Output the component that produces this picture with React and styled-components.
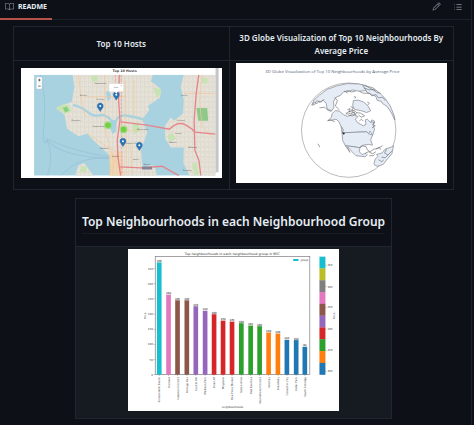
import React from 'react';
import styled, { createGlobalStyle } from 'styled-components';
import { GoBook, GoPencil, GoListUnordered } from 'react-icons/go';

const GlobalStyle = createGlobalStyle`
  * { box-sizing: border-box; }
  body {
    margin: 0;
    background: #0d1117;
    color: #e6edf3;
    font-family: "Noto Sans", "Open Sans", sans-serif;
  }
`;

const Panel = styled.main`
  min-height: 100vh;
  margin-right: 2px;
  border-right: 1px solid #1c222a;
`;

const Bar = styled.header`
  display: flex;
  justify-content: space-between;
  height: 20px;
  border-bottom: 1px solid #1c222a;
`;

const Tab = styled.a`
  display: flex;
  align-items: center;
  gap: 4px;
  padding: 0 5px 5px 5px;
  height: 20px;
  border-bottom: 2px solid #b5524b;
  color: #e6edf3;
  font-size: 7px;
  font-weight: 700;
  text-decoration: none;
  svg { color: #8b949e; }
`;

const Tools = styled.div`
  display: flex;
  align-items: flex-start;
  gap: 12px;
  padding: 2px 8px 0 0;
`;

const ToolButton = styled.button`
  display: flex;
  padding: 0;
  border: 0;
  background: none;
  color: #8b949e;
`;

const Article = styled.article`
  display: flex;
  flex-direction: column;
  align-items: center;
  gap: 8px;
  padding: 6px 17px 4px 13px;
`;

const Table = styled.table`
  width: ${(p) => p.$width};
  border-collapse: collapse;
  table-layout: fixed;
`;

const HeadCell = styled.th`
  width: ${(p) => p.$width};
  height: ${(p) => p.$height};
  padding: 0 6px;
  border: 1px solid #20262e;
  font-size: 8px;
  line-height: 13px;
  font-weight: 600;
`;

const Cell = styled.td`
  padding: ${(p) => p.$pad};
  border: 1px solid #20262e;
  background: ${(p) => (p.$raised ? '#161b22' : 'transparent')};
`;

const Title = styled.h1`
  margin: 2px 0 0;
  padding-bottom: 2px;
  border-bottom: 1px solid #171c23;
  font-size: 12px;
  line-height: 19px;
  font-weight: 600;
  white-space: nowrap;
`;

const Picture = styled.svg`
  display: block;
  width: ${(p) => p.$width || '100%'};
  margin: 0 auto;
  background: #fff;
`;

const pins = [[255, 154], [303, 120], [323, 259], [372, 271]];
const places = [
  [255, 72, 'Greenwood'], [204, 108, 'Ballard'], [255, 120, 'Phinney'], [182, 183, 'Magnolia'],
  [250, 202, 'Queen Anne'], [268, 266, 'Belltown'], [300, 290, 'Seattle'], [382, 210, 'Washington'],
  [347, 250, 'Capitol Hill'], [362, 298, 'Leschi'], [506, 108, 'Juanita'], [496, 184, 'Kirkland'],
  [488, 220, 'Yarrow'], [472, 247, 'Medina'], [531, 263, 'Bellevue'], [515, 332, 'Eastgate'],
  [395, 315, 'Mercer'],
];

const HostsMap = () => (
  <Picture viewBox="18 24 600 330" role="img" aria-label="Map of the top 10 hosts">
    <defs>
      <pattern id="streets" width="12" height="15" patternUnits="userSpaceOnUse">
        <path d="M4 0V15M10 0V9M0 5H12M0 12H9" stroke="#cfcac2" strokeWidth="1" fill="none" />
      </pattern>
      <clipPath id="mapArea"><rect x="57" y="44" width="543" height="302" /></clipPath>
    </defs>
    <text x="328" y="36" fontSize="10" fontFamily="DejaVu Sans" fontWeight="700" textAnchor="middle" fill="#444">Top 10 Hosts</text>
    <g clipPath="url(#mapArea)">
      <rect x="57" y="44" width="543" height="302" fill="#a8d2df" />
      {['#e9e5da', 'url(#streets)'].map((fill) => (
        <g key={fill} fill={fill}>
          <path d="M172 44L178 80 170 126 145 134 124 145 148 163 156 206 190 228 216 220 236 242 258 262 282 284 286 312 284 346H410L390 332 380 310 377 270 396 215 380 178 402 150 397 138 434 112 436 86 406 64 412 44Z" />
          <path d="M180 346L190 316 207 308 235 346Z" />
          <path d="M505 44L496 80 505 120 503 160 476 182 466 172 448 198 450 236 466 262 505 262 504 308 522 346H600V44Z" />
          <path d="M384 346L392 322 402 314 418 318 424 346Z" />
        </g>
      ))}
      <g fill="#c7e3b4">
        <path d="M122 144L143 133 160 134 170 152 150 161Z" />
        <path d="M412 82L434 86 438 100 424 112Z" />
        <path d="M226 50L244 46 250 60 232 66Z" />
        <path d="M350 190L369 186 374 212 356 222Z" />
        <path d="M530 310L543 306 550 342 537 346Z" />
        <path d="M200 318L216 320 212 338 194 332Z" />
        <path d="M560 52L578 56 574 72 558 68Z" />
        <path d="M455 228L470 218 482 236 464 244Z" />
      </g>
      <path d="M543 144H575L578 182H548Z" fill="#8fc98a" />
      <path d="M143 143L155 139 162 152 150 157Z" fill="#86d07f" />
      <path d="M174 134Q200 140 218 156T262 164Q280 168 290 184L302 182Q310 164 330 166T384 178" fill="none" stroke="#a8d2df" strokeWidth="7" />
      <path d="M286 180L304 184 302 214 292 222 284 202Z" fill="#a8d2df" />
      <path d="M272 96Q282 88 286 104T276 122Z" fill="#a8d2df" />
      <path d="M76 44Q94 110 87 190T96 240Q116 280 98 346M96 236Q180 276 286 290M92 234Q130 290 286 294M138 346Q190 286 286 294" fill="none" stroke="#86a9d6" strokeWidth="1" />
      <g fill="none" stroke="#f2c799" strokeWidth="2">
        <path d="M268 44L270 130 272 220 284 262 296 300 292 346M190 44L198 120 210 170M210 110H330M330 60L334 346M216 220L280 262 318 282M356 60V170M318 210H372M560 44L552 120 560 200 600 240M505 100H600" />
        <path d="M300 300L320 346M280 346L304 290M346 250L350 346" />
      </g>
      <path d="M280 280L320 274 326 346H284Z" fill="#f6cf9f" opacity=".6" />
      <g fill="none" stroke="#e5848b" strokeWidth="4">
        <path d="M312 44L310 120 314 180 306 240 308 290 316 346" />
        <path d="M316 185L395 195 462 207Q488 182 510 194T538 216L600 222" />
        <path d="M550 44L542 100 536 180 538 270 550 300 556 346" />
        <path d="M314 320L376 323 440 318 490 346" />
      </g>
      <path d="M380 323H410" stroke="#888397" strokeWidth="9" />
      <path d="M318 44L320 340M300 44V120" stroke="#e68a80" strokeWidth="2" strokeDasharray="8 4" />
      <g fontFamily="DejaVu Sans" fontSize="6" textAnchor="middle" fill="#606060">
        {places.map(([x, y, label]) => <text key={label} x={x} y={y}>{label}</text>)}
      </g>
    </g>
    {[[278, 195], [325, 208]].map(([x, y]) => (
      <g key={x}>
        <circle cx={x} cy={y} r="12" fill="#8ede72" opacity=".7" />
        <circle cx={x} cy={y} r="8" fill="#6ecc39" opacity=".9" />
      </g>
    ))}
    {pins.map(([x, y]) => (
      <g key={x}>
        <path d={`M${x} ${y}L${x - 8} ${y - 12}A9 9 0 1 1 ${x + 8} ${y - 12}Z`} fill="#2874b8" stroke="#1c578f" />
        <circle cx={x} cy={y - 16} r="3" fill="#fff" />
      </g>
    ))}
    <path d="M286 71H320Q324 71 324 75V90Q324 94 320 94H308L303 101 298 94H286Q282 94 282 90V75Q282 71 286 71Z" fill="#fff" />
    <text x="302" y="85" fontFamily="DejaVu Sans" fontSize="6" textAnchor="middle" fill="#555">Host</text>
    <path d="M316 75L320 79M320 75L316 79" stroke="#999" />
    <rect x="64" y="51" width="17" height="36" rx="3" fill="#fff" stroke="#b8c4c8" />
    <path d="M65 69H80" stroke="#ccc" />
    <path d="M69 60H77M73 56V64M69 78H77" stroke="#333" strokeWidth="2" />
    <path d="M600 24H609V336H600Z" fill="#c6c6c6" />
  </Picture>
);

const lands = [
  'M243 136L250 120 266 106 290 88 318 78 350 71 385 72 402 76 428 92 416 100 404 92 386 94 366 90 350 96 340 94 330 106 316 112 308 126 310 142 304 152 290 149 286 130 276 120 268 128 258 122 252 134Z',
  'M396 76L426 83 446 98 464 116 479 138 491 168 493 180 483 160 470 140 456 131 452 124 440 122 436 110 424 104 410 98Z',
  'M368 122L384 121 400 127 412 138 420 153 408 158 390 152 372 149 366 138Z',
  'M326 154L314 152 304 162 302 172 292 182 304 181 316 178 325 186 331 200 334 219 408 216 414 222 418 214 426 226 432 208 428 198 432 184 424 180 420 188 410 178 404 180 406 194 398 198 380 188 374 178 382 170 366 164 350 170 338 164Z',
  'M334 219L408 216 414 222 426 226 420 240 426 256 414 254 398 256 388 264 370 261 344 258 336 242Z',
  'M344 258L370 261 388 264 386 276 394 284 406 281 410 285 404 291 376 288 364 276 356 266 350 262 358 278Z',
  'M430 311L434 298 442 290 438 284 454 280 464 268 482 262 489 258 484 282 468 301 458 314 440 320 432 316Z',
];
const coasts = [
  'M244 134L252 126 258 132 264 124 272 126 280 118M266 144L282 142 290 150 302 155M290 183L300 180 312 186M312 112L320 122 314 138 326 150',
  'M340 96L352 92 362 96 374 94M386 94L398 100 416 100 424 108 436 104 444 114 456 112 464 122M400 84L416 90 430 88 438 98 450 100M404 76L420 86 434 94',
  'M410 126L416 130 412 135M370 110L376 112 372 115M346 96L350 100',
  'M350 150L358 146 356 156 364 150 368 158 360 162 350 158 346 164M360 140L368 144 364 150 374 154 370 162M376 158L390 160 402 168 392 172 384 166M346 158L354 166 366 168 378 160M352 154L370 158 376 166',
  'M386 184L392 178 398 184M420 186L432 188 426 194 434 198 424 204M332 200L338 210 334 220',
  'M388 264L392 258 406 260 410 270 418 276 430 268 442 266 456 258M404 280L414 276 426 282 436 276M416 288L428 288 432 284M436 268L446 262 450 270',
  'M261 252L264 256 267 262',
  'M452 292L464 294 474 284M444 300L454 306 460 300M468 268L462 280 472 286 484 274',
];

const Globe = () => (
  <Picture viewBox="15 9 636 360" role="img" aria-label="Globe of the top 10 neighbourhoods by average price">
    <text x="305" y="38" fontFamily="Open Sans" fontSize="13" textAnchor="middle" fill="#50617c">3D Globe Visualization of Top 10 Neighbourhoods by Average Price</text>
    <circle cx="354" cy="211" r="142" fill="#fff" stroke="#999" strokeWidth="2" />
    <g fill="#e5ecf6" stroke="#7d8189" strokeWidth="2" strokeLinejoin="round">
      {lands.map((d) => <path key={d} d={d} />)}
    </g>
    <g fill="none" stroke="#6f7177" strokeWidth="2" strokeLinejoin="round">
      {coasts.map((d) => <path key={d} d={d} />)}
    </g>
    <circle cx="339" cy="221" r="3" fill="#15203c" />
  </Picture>
);

const bars = [
  [103, 55, '#17becf', 'Sammamish Beach', 370], [131, 152, '#e377c2', 'Fremont', 264],
  [158, 169, '#8c564b', 'Industrial District', 245], [186, 169, '#8c564b', 'Portage Bay', 245],
  [213, 187, '#9467bd', 'Capitol Hill', 225], [241, 201, '#9467bd', 'Madison Park', 210],
  [268, 211, '#d62728', 'Briarcliff', 199], [295, 230, '#d62728', 'Magnolia', 178],
  [322, 233, '#d62728', 'Pike Place Market', 175], [350, 238, '#2ca02c', 'Queen Anne', 169],
  [378, 245, '#2ca02c', 'Red Beaches', 162], [405, 247, '#2ca02c', 'International District', 160],
  [432, 266, '#ff7f0e', 'Interbay', 139], [460, 269, '#ff7f0e', 'Broadway', 136],
  [487, 288, '#1f77b4', 'Columbia City', 115], [515, 289, '#1f77b4', 'Cedar Park', 114],
  [541, 309, '#1f77b4', 'South Delridge', 92],
];
const yTicks = [[393, 0], [348, 50], [302, 100], [257, 150], [211, 200], [165, 250], [119, 300], [74, 350]];
const scale = ['#17becf', '#bcbd22', '#7f7f7f', '#e377c2', '#8c564b', '#9467bd', '#d62728', '#2ca02c', '#ff7f0e', '#1f77b4'];
const scaleTicks = [[64, 350], [128, 300], [191, 250], [256, 200], [320, 150], [383, 100]];

const PriceChart = () => (
  <Picture $width="67%" viewBox="9 15 636 489" role="img" aria-label="Top neighbourhoods in each neighbourhood group">
    <g fontFamily="DejaVu Sans" fontSize="8" fill="#333">
      <text x="323" y="34" fontSize="10" textAnchor="middle">Top neighbourhoods in each neighbourhood group in NYC</text>
      <rect x="91" y="38" width="465" height="355" fill="none" stroke="#777" strokeWidth="2" />
      {yTicks.map(([y, v]) => (
        <g key={v}>
          <path d={`M86 ${y}H91`} stroke="#555" />
          <text x="84" y={y + 3} textAnchor="end">{v}</text>
        </g>
      ))}
      {bars.map(([x, y, color, name, value]) => (
        <g key={name}>
          <rect x={x - 7} y={y} width="14" height={393 - y} fill={color} />
          <rect x={x - 6} y={y - 7} width="12" height="7" fill="#ddd" />
          <text x={x} y={y - 1} textAnchor="middle">{value}</text>
          <path d={`M${x} 393V397`} stroke="#555" />
          <text transform={`translate(${x + 3} 400) rotate(-90)`} textAnchor="end">{name}</text>
        </g>
      ))}
      <rect x="506" y="45" width="16" height="6" fill="#17becf" />
      <text x="528" y="51">group</text>
      {scale.map((color, i) => <rect key={color} x="585" y={38 + i * 35.5} width="18" height="36" fill={color} />)}
      {scaleTicks.map(([y, v]) => (
        <g key={v}>
          <path d={`M603 ${y}H607`} stroke="#555" />
          <text x="609" y={y + 3}>{v}</text>
        </g>
      ))}
      <text transform="translate(63 216) rotate(-90)" textAnchor="middle">Price</text>
      <text transform="translate(633 216) rotate(-90)" textAnchor="middle">Price</text>
      <text x="323" y="492" textAnchor="middle">neighbourhoods</text>
    </g>
  </Picture>
);

export default function App() {
  return (
    <>
      <GlobalStyle />
      <Panel>
        <Bar>
          <Tab href="#readme"><GoBook size={9} />README</Tab>
          <Tools>
            <ToolButton aria-label="Edit file"><GoPencil size={9} /></ToolButton>
            <ToolButton aria-label="Outline"><GoListUnordered size={10} /></ToolButton>
          </Tools>
        </Bar>
        <Article id="readme">
          <Table $width="100%">
            <thead>
              <tr>
                <HeadCell $width="49%" $height="34px">Top 10 Hosts</HeadCell>
                <HeadCell $width="51%" $height="34px">3D Globe Visualization of Top 10 Neighbourhoods By Average Price</HeadCell>
              </tr>
            </thead>
            <tbody>
              <tr>
                <Cell $pad="3px 7px 7px"><HostsMap /></Cell>
                <Cell $pad="2px 6px 6px"><Globe /></Cell>
              </tr>
            </tbody>
          </Table>
          <Table $width="72%">
            <thead>
              <tr><HeadCell $height="48px"><Title>Top Neighbourhoods in each Neighbourhood Group</Title></HeadCell></tr>
            </thead>
            <tbody>
              <tr><Cell $raised $pad="2px 0 7px"><PriceChart /></Cell></tr>
            </tbody>
          </Table>
        </Article>
      </Panel>
    </>
  );
}
